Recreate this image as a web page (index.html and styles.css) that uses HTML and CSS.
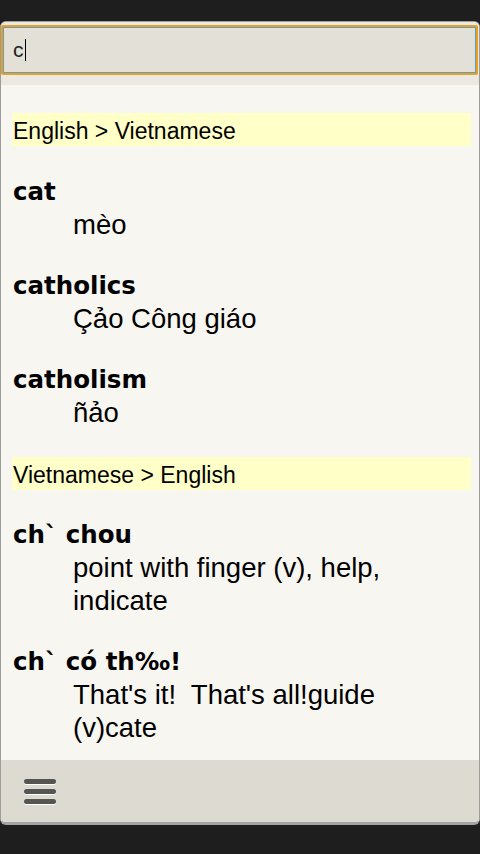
FILE: index.html
```html
<!DOCTYPE html>
<html>
<head>
<meta charset="utf-8">
<link rel="stylesheet" href="styles.css">
</head>
<body>
<div class="statusbar"></div>
<div class="window">
  <div class="searchbar">
    <div class="input"><span class="query">c</span><span class="caret"></span></div>
  </div>
  <div class="content">
    <div class="section">English &gt; Vietnamese</div>
    <div class="entry">
      <div class="word">cat</div>
      <div class="def">mèo</div>
    </div>
    <div class="entry">
      <div class="word">catholics</div>
      <div class="def">Çảo Công giáo</div>
    </div>
    <div class="entry">
      <div class="word">catholism</div>
      <div class="def">ñảo</div>
    </div>
    <div class="section second">Vietnamese &gt; English</div>
    <div class="entry">
      <div class="word">ch` chou</div>
      <div class="def">point with finger (v), help, indicate</div>
    </div>
    <div class="entry">
      <div class="word">ch` có th‰!</div>
      <div class="def">That's it!&nbsp; That's all!guide (v)cate</div>
    </div>
  </div>
  <div class="toolbar">
    <div class="menu"><span></span><span></span><span></span></div>
  </div>
</div>
</body>
</html>
```

FILE: styles.css
```css
html, body {
  margin: 0;
  padding: 0;
  background: #1e1e1e;
  height: 854px;
  overflow: hidden;
}
.statusbar {
  height: 21px;
  background: #1e1e1e;
}
.window {
  height: 804px;
  box-sizing: border-box;
  background: #f8f6f0;
  border: 1px solid #9c9c9a;
  border-bottom: 3px solid #a4a4a2;
  border-radius: 6px;
  display: flex;
  flex-direction: column;
  overflow: hidden;
  font-family: "Liberation Sans", Arial, sans-serif;
  color: #000;
}
.searchbar {
  background: #ece9e2;
  padding: 3px 1px 10px 0;
}
.input {
  height: 50px;
  box-sizing: border-box;
  border: 2px solid #e9a11e;
  box-shadow: inset 0 0 0 1px #5f9cc6;
  background: #e3e0d8;
  border-radius: 2px;
  display: flex;
  align-items: center;
  padding-left: 10px;
  font-size: 21px;
}
.query {
  color: #222;
}
.caret {
  display: inline-block;
  width: 1px;
  height: 22px;
  background: #000;
  margin-left: 1px;
}
.content {
  flex: 1;
  padding: 28px 8px 0 11px;
  overflow: hidden;
}
.section {
  background: #ffffc8;
  height: 33px;
  line-height: 36px;
  font-size: 23px;
  padding-left: 1px;
  margin-bottom: 29px;
}
.section.second {
  margin-top: 1px;
  margin-bottom: 28px;
}
.entry {
  margin-bottom: 28px;
}
.word {
  font-family: "DejaVu Sans", sans-serif;
  font-weight: bold;
  font-size: 24.5px;
  line-height: 33px;
  padding-left: 1px;
}
.def {
  font-size: 27.5px;
  line-height: 33px;
  padding-left: 61px;
  padding-right: 40px;
}
.toolbar {
  height: 62px;
  flex: none;
  background: #dddad2;
  display: flex;
  align-items: center;
  padding-left: 23px;
}
.menu {
  display: flex;
  flex-direction: column;
  gap: 5px;
  margin-top: 1px;
}
.menu span {
  display: block;
  width: 32px;
  height: 5px;
  border-radius: 3px;
  background: #555553;
  box-shadow: 0 1px 0 #ffffff;
}
```
